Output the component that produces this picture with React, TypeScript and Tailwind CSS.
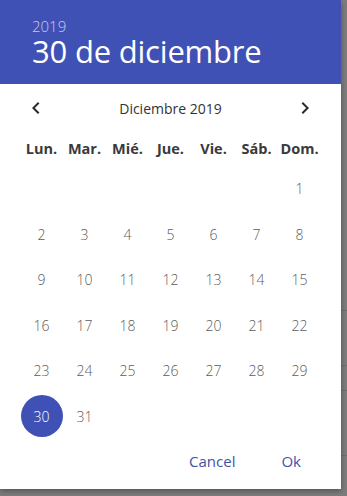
import React from "react";

const weekDays = ["Lun.", "Mar.", "Mié.", "Jue.", "Vie.", "Sáb.", "Dom."];

// December 2019 starts on a Sunday
const cells: (number | null)[] = [
  null, null, null, null, null, null, 1,
  ...Array.from({ length: 30 }, (_, i) => i + 2),
];

const Arrow = ({ dir }: { dir: "left" | "right" }) => (
  <svg width="24" height="24" viewBox="0 0 24 24" fill="#2a2a2a">
    {dir === "left" ? (
      <path d="M15.41 16.59L10.83 12l4.58-4.59L14 6l-6 6 6 6 1.41-1.41z" />
    ) : (
      <path d="M8.59 16.59L13.17 12 8.59 7.41 10 6l6 6-6 6-1.41-1.41z" />
    )}
  </svg>
);

const App = () => {
  const rows: (number | null)[][] = [];
  for (let i = 0; i < cells.length; i += 7) rows.push(cells.slice(i, i + 7));

  return (
    <div
      className="relative w-[347px] h-[496px] bg-[#7d7d7d] overflow-hidden"
      style={{ fontFamily: '"Open Sans", "Noto Sans", sans-serif' }}
    >
      {/* page behind the dialog */}
      <div className="flex flex-col pt-[310px]">
        <div className="h-[55px] border-t border-[#6f6f6f]" />
        <div className="h-[25px] border-t border-[#6f6f6f]" />
        <div className="h-[65px] border-t border-[#6f6f6f]" />
        <div className="border-t border-[#6f6f6f]" />
      </div>

      {/* dialog */}
      <div className="absolute top-0 left-0 w-[341px] h-[489px] bg-white flex flex-col shadow-[0_2px_6px_rgba(0,0,0,0.35)]">
        <div className="h-[84px] bg-[#3f51b5] flex flex-col px-[32px] pt-[19px]">
          <span className="text-[15px] leading-[15px] text-[#c5cae9] font-light">2019</span>
          <span className="text-[31px] leading-[34px] tracking-[-0.2px] text-white">
            30 de diciembre
          </span>
        </div>

        <div className="h-[48px] flex items-center justify-between px-[24px]">
          <Arrow dir="left" />
          <span className="text-[14px] text-[#333]">Diciembre 2019</span>
          <Arrow dir="right" />
        </div>

        <div className="px-[20px] flex flex-col">
          <div className="grid grid-cols-7 h-[34px] items-center">
            {weekDays.map((d) => (
              <span key={d} className="text-center text-[14.5px] font-bold text-[#3a3a3a]">
                {d}
              </span>
            ))}
          </div>
          {rows.map((row, ri) => (
            <div key={ri} className="grid grid-cols-7 h-[45.5px]">
              {Array.from({ length: 7 }, (_, ci) => {
                const d = row[ci];
                const selected = d === 30;
                return (
                  <div key={ci} className="flex items-center justify-center">
                    {d !== null && d !== undefined && (
                      <span
                        className={
                          selected
                            ? "w-[42px] h-[42px] rounded-full bg-[#3f51b5] text-white flex items-center justify-center text-[14px] font-light"
                            : "text-[14px] text-[#5c5c5c] font-light"
                        }
                      >
                        {d}
                      </span>
                    )}
                  </div>
                );
              })}
            </div>
          ))}
        </div>

        <div className="h-[44px] flex items-center justify-end gap-[46px] pr-[40px]">
          <button className="text-[15px] text-[#4152a8]">Cancel</button>
          <button className="text-[15px] text-[#4152a8]">Ok</button>
        </div>
      </div>
    </div>
  );
};

export default App;
